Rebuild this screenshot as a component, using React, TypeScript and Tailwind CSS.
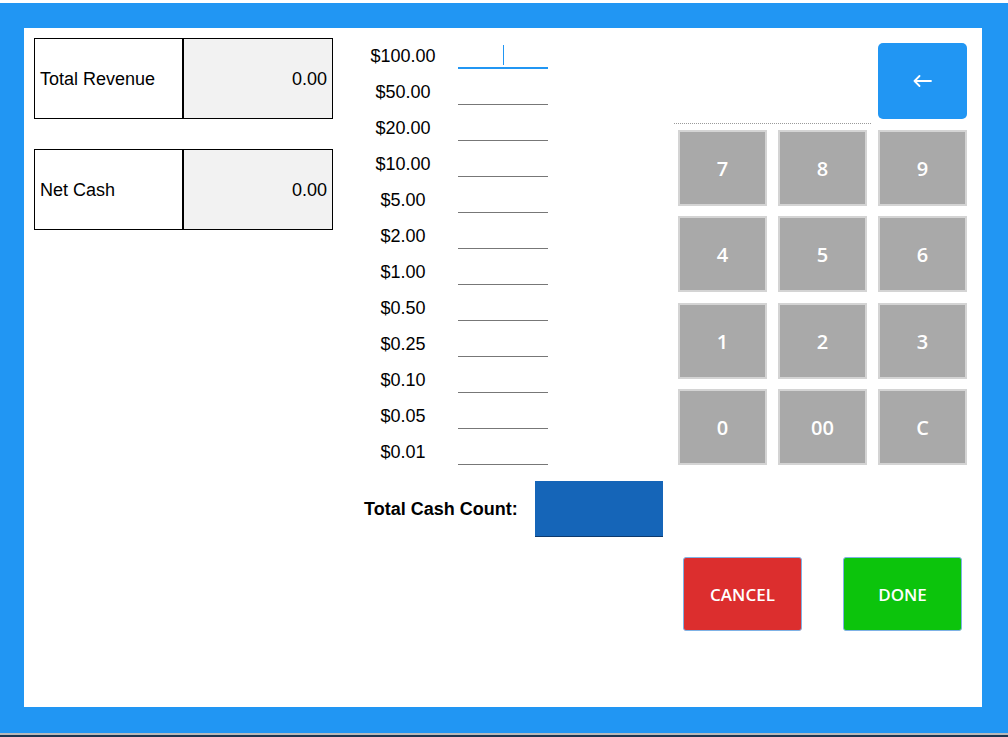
import React from "react";

// Cash count dialog: summary boxes, denomination inputs, keypad
const denominations = [
  "$100.00",
  "$50.00",
  "$20.00",
  "$10.00",
  "$5.00",
  "$2.00",
  "$1.00",
  "$0.50",
  "$0.25",
  "$0.10",
  "$0.05",
  "$0.01",
];

const keys = ["7", "8", "9", "4", "5", "6", "1", "2", "3", "0", "00", "C"];

function SummaryBox({ label, value }: { label: string; value: string }) {
  return (
    <div className="flex h-[81px] w-[299px] border border-black">
      <div className="flex w-[149px] items-center border-r-2 border-black pl-[5px] pt-[2px] text-[18px] text-black">
        {label}
      </div>
      <div className="flex flex-1 items-center justify-end bg-[#f2f2f2] pr-[5px] pt-[2px] text-[18px] text-black">
        {value}
      </div>
    </div>
  );
}

export default function App() {
  return (
    <div className="h-[737px] w-[1008px] overflow-hidden bg-white pt-[3px] font-['Liberation_Sans',Arial,sans-serif]">
      {/* Blue frame */}
      <div className="h-[730px] w-[1008px] bg-[#2196f3] pb-[26px] pl-[24px] pr-[26px] pt-[25px]">
        <div className="flex h-[679px] w-[958px] bg-white pl-[10px]">
          {/* Left: totals */}
          <div className="mt-[10px] flex w-[299px] flex-col gap-[30px]">
            <SummaryBox label="Total Revenue" value="0.00" />
            <SummaryBox label="Net Cash" value="0.00" />
          </div>

          {/* Middle: denominations */}
          <div className="ml-[30px] mt-[5px] flex w-[311px] flex-col">
            {denominations.map((d, i) => (
              <div key={d} className="flex h-[36px] items-end">
                <div className="w-[80px] pb-[3px] text-center text-[18px] leading-[20px] text-black">
                  {d}
                </div>
                <div
                  className={
                    i === 0
                      ? "relative ml-[15px] h-[28px] w-[90px] border-b-2 border-[#2196f3]"
                      : "relative ml-[15px] h-[28px] w-[90px] border-b border-[#777777]"
                  }
                >
                  {i === 0 && (
                    <span className="absolute left-[45px] top-[4px] h-[20px] w-px bg-[#2196f3]" />
                  )}
                </div>
              </div>
            ))}
            <div className="mt-[16px] flex items-center pl-[1px]">
              <span className="pt-[1px] text-[18px] font-bold text-black">Total Cash Count:</span>
              <div className="ml-[17px] h-[56px] w-[128px] border-b border-[#0d3a6e] bg-[#1565b8]" />
            </div>
          </div>

          {/* Right: keypad */}
          <div className="mt-[15px] flex w-[293px] flex-col font-['Open_Sans',sans-serif]">
            <div className="flex justify-end">
              <button className="flex h-[76px] w-[89px] items-center justify-center rounded-[5px] bg-[#2196f3]">
                <svg width="19" height="12" viewBox="0 0 19 12" fill="none">
                  <path
                    d="M18 6H1.5M6.5 1L1.5 6l5 5"
                    stroke="white"
                    strokeWidth="1.8"
                    strokeLinecap="round"
                    strokeLinejoin="round"
                  />
                </svg>
              </button>
            </div>
            <div className="mt-[4px] w-[197px] border-t border-dotted border-[#9a9a9a]" />
            <div className="mt-[6px] grid grid-cols-[89px_89px_89px] gap-x-[11px] gap-y-[10.33px] pl-[4px]">
              {keys.map((k) => (
                <button
                  key={k}
                  className="flex h-[76px] items-center justify-center border-2 border-[#d4d4d4] bg-[#a9a9a9] pt-[2px] text-[20px] font-semibold text-white"
                >
                  {k}
                </button>
              ))}
            </div>
            <div className="mt-[92px] flex gap-[41px] pl-[9px]">
              <button className="h-[74px] w-[119px] rounded-[3px] border border-[#7fb2e5] bg-[#dc2e2e] pt-[1px] text-[17px] font-semibold text-white">
                CANCEL
              </button>
              <button className="h-[74px] w-[119px] rounded-[3px] border border-[#7fb2e5] bg-[#0cc40c] pt-[1px] text-[17px] font-semibold text-white">
                DONE
              </button>
            </div>
          </div>
        </div>
      </div>
      {/* Bottom edge */}
      <div className="h-[2px] w-full bg-[#b9b9b9]" />
      <div className="h-[2px] w-full bg-[#1d3550]" />
    </div>
  );
}
